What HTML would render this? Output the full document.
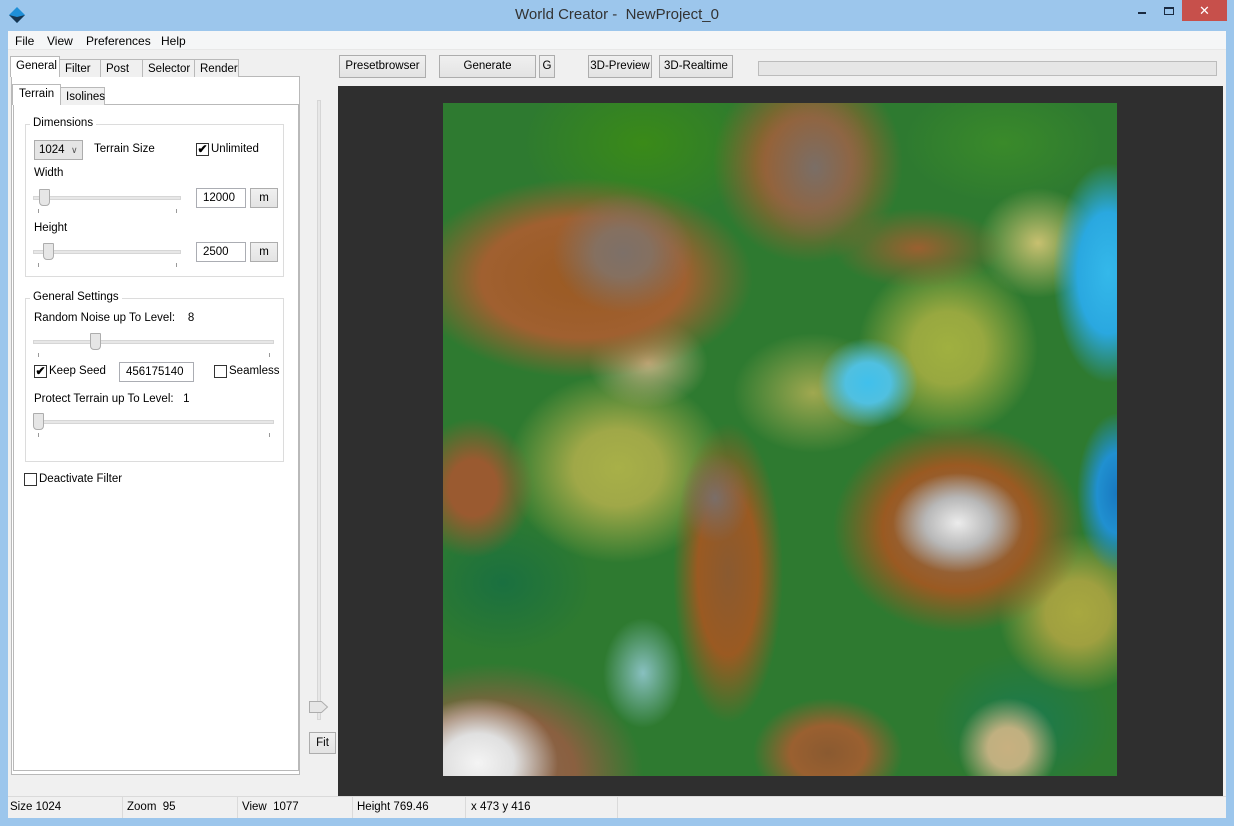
<!DOCTYPE html>
<html><head><style>
*{box-sizing:border-box;margin:0;padding:0}
body{width:1234px;height:826px;background:#9cc6ec;font-family:"Liberation Sans",sans-serif;font-size:11.5px;color:#000;position:relative;overflow:hidden}
.a{position:absolute}
.btn{position:absolute;background:linear-gradient(#f0f0f0,#e3e3e3);border:1px solid #adadad;text-align:center;line-height:20px}
.tab{position:absolute;background:#f0f0f0;border:1px solid #b9b9b9;border-bottom:none;line-height:18px;padding-left:5px}
.gb{position:absolute;border:1px solid #dcdcdc}
.lg{position:absolute;background:#fff;padding:0 3px;top:-8px;left:4px}
.trk{position:absolute;height:4px;background:#e7e7e7;border:1px solid #d6d6d6}
.th{position:absolute;width:11px;height:17px;background:#e6e6e6;border:1px solid #adadad;border-radius:1px 1px 4px 4px}
.tk{position:absolute;width:1px;height:4px;background:#999}
.inp{position:absolute;background:#fff;border:1px solid #abadb3;line-height:18px;padding-left:6px}
.cb{position:absolute;width:13px;height:13px;border:1px solid #333;background:#fff;font-size:12px;line-height:11px;text-align:center;font-weight:bold}
.st{position:absolute;top:797px;height:21px;line-height:21px;border-right:1px solid #dadada}
</style></head><body>
<svg class="a" style="left:9px;top:7px" width="16" height="16"><polygon points="8,0 16,8 8,16 0,8" fill="#1f8fd8"/><polygon points="0,8 8,16 16,8 8,10" fill="#173550"/></svg>
<div class="a" style="left:0;width:1234px;top:6px;text-align:center;font-size:15px;color:#333">World Creator -&nbsp; NewProject_0</div>
<div class="a" style="left:1138px;top:12px;width:8px;height:2px;background:#1a2a40"></div>
<div class="a" style="left:1164px;top:7px;width:10px;height:8px;border:1px solid #1a2a40;border-top-width:2px"></div>
<div class="a" style="left:1182px;top:0;width:45px;height:21px;background:#c7504b;color:#fff;text-align:center;font-size:13px;line-height:21px">✕</div>
<div class="a" style="left:8px;top:31px;width:1218px;height:787px;background:#f0f0f0"></div>
<div class="a" style="left:8px;top:31px;width:1218px;height:19px;background:#f5f6f7;border-bottom:1px solid #e8e8e8"></div>
<div class="a" style="left:15px;top:34px;font-size:12px">File</div>
<div class="a" style="left:47px;top:34px;font-size:12px">View</div>
<div class="a" style="left:86px;top:34px;font-size:12px">Preferences</div>
<div class="a" style="left:161px;top:34px;font-size:12px">Help</div>
<div class="a" style="left:11px;top:76px;width:289px;height:699px;background:#fff;border:1px solid #b9b9b9"></div>
<div class="tab" style="left:59px;top:59px;width:42px;height:18px">Filter</div>
<div class="tab" style="left:100px;top:59px;width:43px;height:18px">Post</div>
<div class="tab" style="left:142px;top:59px;width:53px;height:18px">Selector</div>
<div class="tab" style="left:194px;top:59px;width:45px;height:18px">Render</div>
<div class="tab" style="left:10px;top:56px;width:50px;height:21px;background:#fff;padding-left:5px">General</div>
<div class="a" style="left:13px;top:104px;width:286px;height:667px;border:1px solid #b9b9b9;background:#fff"></div>
<div class="tab" style="left:60px;top:87px;width:45px;height:18px">Isolines</div>
<div class="tab" style="left:12px;top:84px;width:49px;height:21px;background:#fff;padding-left:6px">Terrain</div>
<div class="gb" style="left:25px;top:124px;width:259px;height:153px"><div class="lg">Dimensions</div></div>
<div class="a" style="left:34px;top:140px;width:49px;height:20px;background:#e5e5e5;border:1px solid #acacac;line-height:18px;padding-left:4px">1024 <span style="position:absolute;left:36px;font-size:9px;color:#555">∨</span></div>
<div class="a" style="left:94px;top:143px">Terrain Size</div>
<div class="cb" style="left:196px;top:143px">✔</div>
<div class="a" style="left:211px;top:143px">Unlimited</div>
<div class="a" style="left:34px;top:167px">Width</div>
<div class="trk" style="left:33px;top:196px;width:148px"></div>
<div class="th" style="left:39px;top:189px"></div>
<div class="tk" style="left:38px;top:209px"></div><div class="tk" style="left:176px;top:209px"></div>
<div class="inp" style="left:196px;top:188px;width:50px;height:20px">12000</div>
<div class="btn" style="left:250px;top:188px;width:28px;height:20px;line-height:18px">m</div>
<div class="a" style="left:34px;top:222px">Height</div>
<div class="trk" style="left:33px;top:250px;width:148px"></div>
<div class="th" style="left:43px;top:243px"></div>
<div class="tk" style="left:38px;top:263px"></div><div class="tk" style="left:176px;top:263px"></div>
<div class="inp" style="left:196px;top:242px;width:50px;height:20px">2500</div>
<div class="btn" style="left:250px;top:242px;width:28px;height:20px;line-height:18px">m</div>
<div class="gb" style="left:25px;top:298px;width:259px;height:164px"><div class="lg">General Settings</div></div>
<div class="a" style="left:34px;top:312px">Random Noise up To Level:&nbsp;&nbsp;&nbsp; 8</div>
<div class="trk" style="left:33px;top:340px;width:241px"></div>
<div class="th" style="left:90px;top:333px"></div>
<div class="tk" style="left:38px;top:353px"></div><div class="tk" style="left:269px;top:353px"></div>
<div class="cb" style="left:34px;top:365px">✔</div>
<div class="a" style="left:49px;top:365px">Keep Seed</div>
<div class="inp" style="left:119px;top:362px;width:75px;height:20px">456175140</div>
<div class="cb" style="left:214px;top:365px"></div>
<div class="a" style="left:229px;top:365px">Seamless</div>
<div class="a" style="left:34px;top:393px">Protect Terrain up To Level:&nbsp;&nbsp; 1</div>
<div class="trk" style="left:33px;top:420px;width:241px"></div>
<div class="th" style="left:33px;top:413px"></div>
<div class="tk" style="left:38px;top:433px"></div><div class="tk" style="left:269px;top:433px"></div>
<div class="cb" style="left:24px;top:473px"></div>
<div class="a" style="left:39px;top:473px">Deactivate Filter</div>
<div class="a" style="left:317px;top:100px;width:4px;height:620px;background:#e7e7e7;border:1px solid #d6d6d6"></div>
<svg class="a" style="left:309px;top:699px" width="22" height="16"><path d="M0.5 2.5H12.5L18.5 8L12.5 13.5H0.5Z" fill="#e6e6e6" stroke="#adadad"/></svg>
<div class="btn" style="left:309px;top:732px;width:27px;height:22px">Fit</div>
<div class="btn" style="left:339px;top:55px;width:87px;height:23px">Presetbrowser</div>
<div class="btn" style="left:439px;top:55px;width:97px;height:23px">Generate</div>
<div class="btn" style="left:539px;top:55px;width:16px;height:23px">G</div>
<div class="btn" style="left:588px;top:55px;width:64px;height:23px">3D-Preview</div>
<div class="btn" style="left:659px;top:55px;width:74px;height:23px">3D-Realtime</div>
<div class="a" style="left:758px;top:61px;width:459px;height:15px;background:#e6e6e6;border:1px solid #bcbcbc"></div>
<div class="a" style="left:338px;top:86px;width:885px;height:710px;background:#2f2f2f"></div>
<div class="a" style="left:443px;top:103px;width:674px;height:673px;background:
radial-gradient(80px 65px at 35px 660px,#f4f4f4,#e0e0e0 45%,transparent),
radial-gradient(150px 110px at 50px 670px,#8a6a55,#8a6040 55%,transparent),
radial-gradient(65px 50px at 515px 420px,#ececec,#b8b8b8 50%,transparent),
radial-gradient(125px 105px at 515px 425px,#8a7060,#9a5a22 60%,transparent),
radial-gradient(40px 80px at 674px 390px,#1878c0,#2090d0 50%,transparent),
radial-gradient(55px 110px at 665px 170px,#34b8ea,#2aa8e0 55%,transparent),
radial-gradient(50px 45px at 425px 280px,#40c0ec,#50c0e0 45%,transparent),
radial-gradient(35px 45px at 272px 395px,#7a6e68,transparent),
radial-gradient(55px 150px at 285px 470px,#8a5a30,#9a5a22 55%,transparent),
radial-gradient(75px 55px at 385px 650px,#8a5a30,#9a6030 50%,transparent),
radial-gradient(70px 60px at 180px 150px,#7d7068,#857060 40%,transparent),
radial-gradient(170px 100px at 140px 175px,#9a5a22,#a06030 60%,transparent),
radial-gradient(60px 75px at 372px 65px,#7a6e66,transparent),
radial-gradient(95px 100px at 365px 60px,#9a6030,#9a6030 45%,transparent),
radial-gradient(85px 40px at 475px 145px,#9a6030,transparent),
radial-gradient(60px 70px at 30px 385px,#9a5a30,#9a5a30 40%,transparent),
radial-gradient(50px 50px at 565px 645px,#c8b080,#c0b080 40%,transparent),
radial-gradient(40px 55px at 200px 570px,#88c0c0,transparent),
radial-gradient(60px 45px at 205px 260px,#c0b080,transparent),
radial-gradient(60px 55px at 595px 140px,#c8c070,transparent),
radial-gradient(90px 90px at 505px 245px,#a0b040,#98a840 40%,transparent),
radial-gradient(110px 95px at 175px 365px,#a8b048,#a0a848 40%,transparent),
radial-gradient(80px 80px at 635px 510px,#a8a840,#a0a040 40%,transparent),
radial-gradient(80px 60px at 370px 290px,#a0a850,transparent),
radial-gradient(90px 70px at 60px 480px,#1a7040,transparent),
radial-gradient(90px 70px at 580px 620px,#1a7a50,transparent),
radial-gradient(120px 80px at 200px 40px,#3a8a18,transparent),
radial-gradient(100px 60px at 560px 40px,#3a8a2a,transparent),
#2e7a30"></div>
<div class="a" style="left:8px;top:796px;width:1218px;height:1px;background:#dadada"></div>
<div class="st" style="left:10px;width:113px">Size 1024</div>
<div class="st" style="left:127px;width:111px">Zoom&nbsp; 95</div>
<div class="st" style="left:242px;width:111px">View&nbsp; 1077</div>
<div class="st" style="left:357px;width:109px">Height 769.46</div>
<div class="st" style="left:471px;width:147px">x 473 y 416</div>
</body></html>
